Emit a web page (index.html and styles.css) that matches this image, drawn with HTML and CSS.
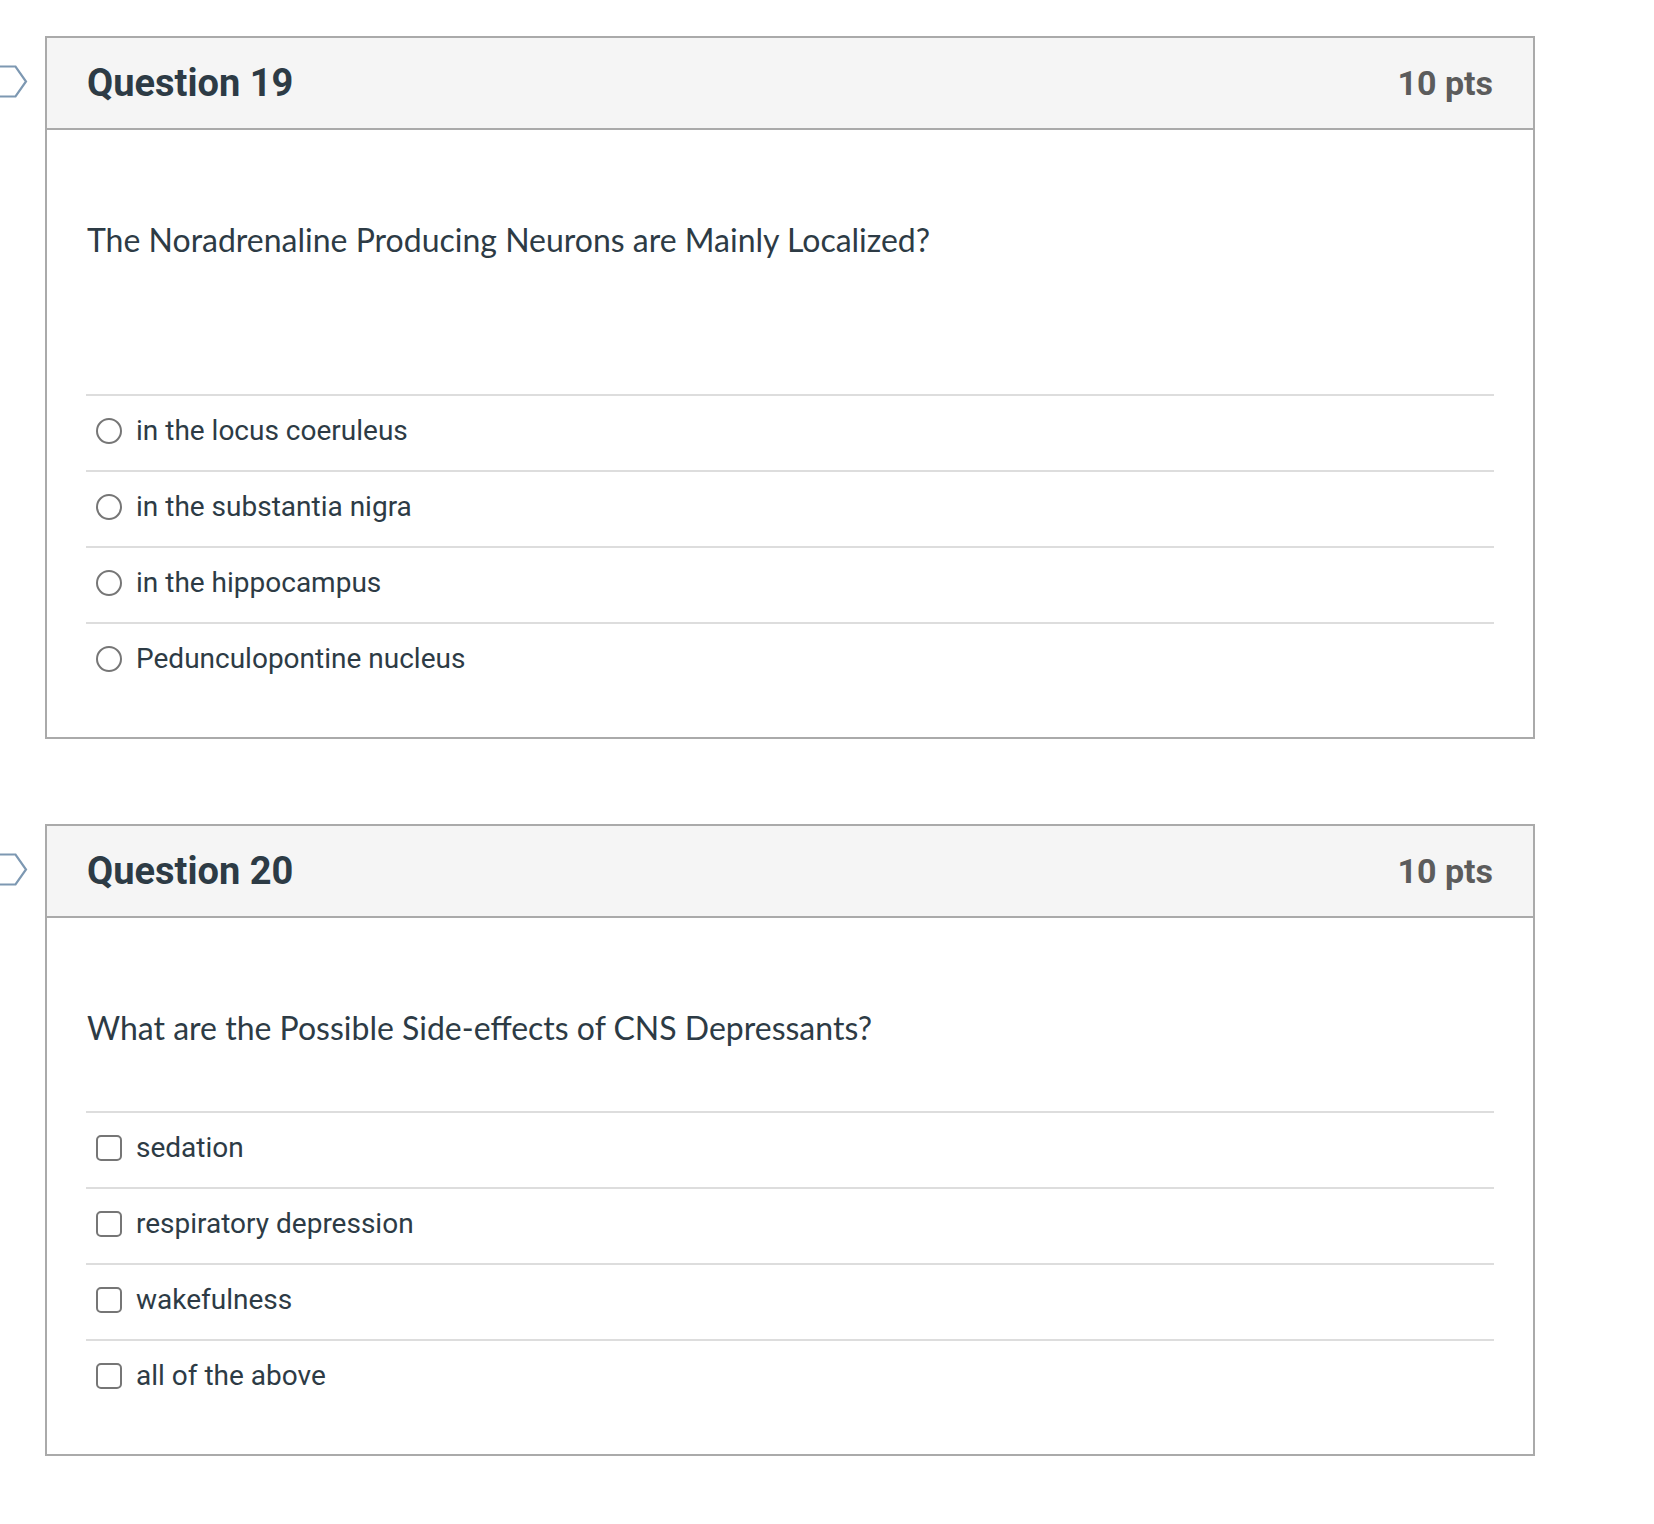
FILE: index.html
```html
<!DOCTYPE html>
<html lang="en">
<head>
<meta charset="utf-8">
<title>Quiz</title>
<link rel="stylesheet" href="styles.css">
</head>
<body>
<main class="quiz">
  <section class="question">
    <svg class="flag" viewBox="0 0 28 33" width="28" height="33" aria-hidden="true">
      <path d="M0 1.5 H15.5 L26 16.5 L15.5 31.5 H0" fill="none" stroke="#7d98b2" stroke-width="2.2" stroke-linejoin="miter"/>
    </svg>
    <header class="q-header">
      <h2 class="q-title">Question 19</h2>
      <span class="q-pts">10 pts</span>
    </header>
    <div class="q-body">
      <p class="q-text q-text--tall">The Noradrenaline Producing Neurons are Mainly Localized?</p>
      <ul class="answers">
        <li class="answer"><input class="radio" type="radio" name="q19"><span class="answer-label">in the locus coeruleus</span></li>
        <li class="answer"><input class="radio" type="radio" name="q19"><span class="answer-label">in the substantia nigra</span></li>
        <li class="answer"><input class="radio" type="radio" name="q19"><span class="answer-label">in the hippocampus</span></li>
        <li class="answer"><input class="radio" type="radio" name="q19"><span class="answer-label">Pedunculopontine nucleus</span></li>
      </ul>
    </div>
  </section>

  <section class="question">
    <svg class="flag" viewBox="0 0 28 33" width="28" height="33" aria-hidden="true">
      <path d="M0 1.5 H15.5 L26 16.5 L15.5 31.5 H0" fill="none" stroke="#7d98b2" stroke-width="2.2" stroke-linejoin="miter"/>
    </svg>
    <header class="q-header">
      <h2 class="q-title">Question 20</h2>
      <span class="q-pts">10 pts</span>
    </header>
    <div class="q-body">
      <p class="q-text">What are the Possible Side-effects of CNS Depressants?</p>
      <ul class="answers">
        <li class="answer"><input class="check" type="checkbox"><span class="answer-label">sedation</span></li>
        <li class="answer"><input class="check" type="checkbox"><span class="answer-label">respiratory depression</span></li>
        <li class="answer"><input class="check" type="checkbox"><span class="answer-label">wakefulness</span></li>
        <li class="answer"><input class="check" type="checkbox"><span class="answer-label">all of the above</span></li>
      </ul>
    </div>
  </section>
</main>
</body>
</html>
```
FILE: styles.css
```css
html, body {
  margin: 0;
  padding: 0;
  background: #ffffff;
}

body {
  font-family: Roboto, "Liberation Sans", Arial, sans-serif;
  color: #2d3b45;
}

.quiz {
  padding: 36px 0 60px 45px;
  display: flex;
  flex-direction: column;
  gap: 85px;
}

.question {
  position: relative;
  width: 1490px;
  box-sizing: border-box;
  border: 2px solid #aaaaaa;
  background: #ffffff;
}

.flag {
  position: absolute;
  left: -47px;
  top: 27px;
  display: block;
}

.q-header {
  height: 92px;
  box-sizing: border-box;
  padding: 0 40px;
  background: #f5f5f5;
  border-bottom: 2px solid #aaaaaa;
  display: flex;
  align-items: center;
  justify-content: space-between;
}

.q-title {
  margin: 0;
  font-family: Roboto, "Liberation Sans", Arial, sans-serif;
  font-weight: 700;
  font-size: 38px;
  line-height: 1;
  color: #2d3b45;
}

.q-pts {
  font-family: Roboto, "Liberation Sans", Arial, sans-serif;
  font-weight: 700;
  font-size: 34px;
  line-height: 1;
  color: #5c5c5c;
}

.q-body {
  padding: 89px 39px 39px 39px;
}

.q-text {
  margin: 0 0 62px 1px;
  font-family: Lato, "Open Sans", sans-serif;
  font-size: 32px;
  line-height: 42px;
  color: #2d3b45;
}

.q-text--tall {
  margin-bottom: 133px;
}

.answers {
  list-style: none;
  margin: 0;
  padding: 0;
}

.answer {
  height: 76px;
  box-sizing: border-box;
  border-top: 2px solid #dddddd;
  display: flex;
  align-items: center;
  padding: 0 0 4px 10px;
}

.radio,
.check {
  -webkit-appearance: none;
  appearance: none;
  margin: 0 14px 0 0;
  width: 26px;
  height: 26px;
  box-sizing: border-box;
  border: 2px solid #767676;
  background: #ffffff;
  flex: none;
}

.radio {
  border-radius: 50%;
}

.check {
  border-radius: 5px;
}

.answer-label {
  font-family: Roboto, "Liberation Sans", Arial, sans-serif;
  font-size: 28px;
  line-height: 36px;
  color: #2d3b45;
}
```
